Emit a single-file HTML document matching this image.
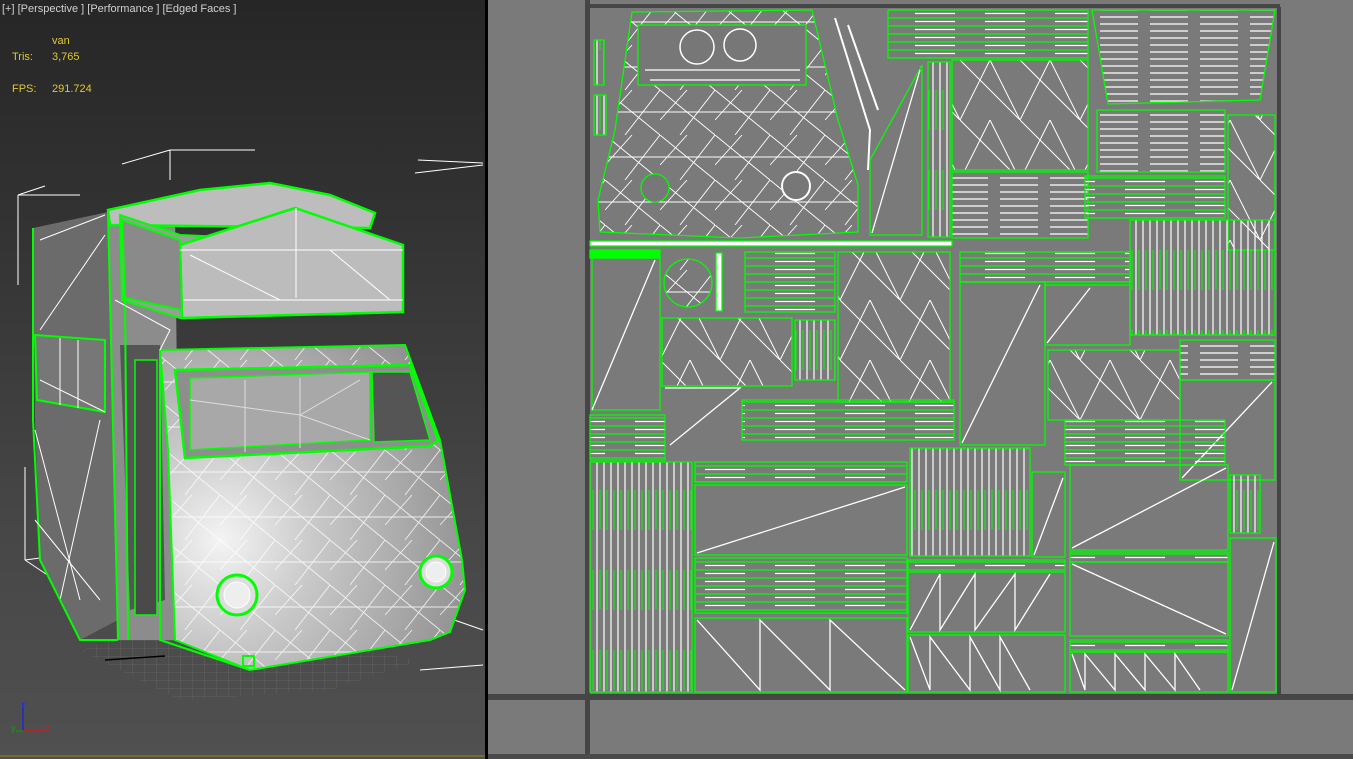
<!DOCTYPE html>
<html><head><meta charset="utf-8"><style>
html,body{margin:0;padding:0;width:1353px;height:759px;overflow:hidden;background:#7a7a7a}
#left{position:absolute;left:0;top:0;width:485px;height:759px;background:linear-gradient(#262626 0%,#333 30%,#474747 70%,#505050 100%)}
.t{position:absolute;font-family:"Liberation Sans",sans-serif;font-size:11px;white-space:pre}
svg{position:absolute;left:0;top:0}
</style></head><body>
<div id="left"></div>
<svg width="1353" height="759" viewBox="0 0 1353 759">
<defs>
<pattern id="hl" width="50" height="7" patternUnits="userSpaceOnUse"><line x1="0" y1="3" x2="38" y2="3" stroke="#fff" stroke-width="1.2"/></pattern>
<pattern id="hg" width="70" height="8" patternUnits="userSpaceOnUse"><line x1="0" y1="2" x2="70" y2="2" stroke="#0f0" stroke-width="1.3"/><line x1="5" y1="5.5" x2="45" y2="5.5" stroke="#fff" stroke-width="1.2"/></pattern>
<pattern id="vl" width="7" height="80" patternUnits="userSpaceOnUse"><line x1="2" y1="0" x2="2" y2="80" stroke="#fff" stroke-width="1.2"/><line x1="5" y1="10" x2="5" y2="50" stroke="#0f0" stroke-width="1"/></pattern>
<pattern id="tri" width="60" height="60" patternUnits="userSpaceOnUse"><path d="M0 60L30 0L60 60M0 0L60 60" stroke="#fff" stroke-width="1" fill="none"/></pattern>
<pattern id="mesh" width="55" height="45" patternUnits="userSpaceOnUse"><path d="M0 0L55 45M55 0L20 45M0 22H55M27 0L0 30" stroke="#fff" stroke-width="0.9" fill="none"/></pattern>
<pattern id="grid" width="12" height="8" patternUnits="userSpaceOnUse"><path d="M0 0H12M0 0V8" stroke="#666" stroke-width="1" fill="none"/></pattern>
<radialGradient id="body" cx="0.2" cy="0.6" r="0.9"><stop offset="0" stop-color="#f4f4f4"/><stop offset="0.35" stop-color="#c8c8c8"/><stop offset="1" stop-color="#8a8a8a"/></radialGradient>
<clipPath id="cab"><polygon points="160,350 405,345 440,440 462,560 465,590 450,632 430,640 250,670 175,640 168,450"/></clipPath>
</defs>

<polygon points="80,650 150,630 300,640 420,660 330,690 180,700" fill="url(#grid)" opacity="0.8"/>
<line x1="105" y1="660" x2="165" y2="656" stroke="#000" stroke-width="1.5"/>
<g stroke="#fff" stroke-width="1" fill="none">
<path d="M122 164L170 150M170 150V180M170 150H255"/><path d="M18 195L45 186M18 195V285M18 195H80"/>
<path d="M418 160L483 163M415 173L483 165"/><path d="M25 467V560M25 560L55 556M25 560L55 580"/>
<path d="M420 670L483 665M440 615L483 630"/>
</g>
<polygon points="33,228 108,212 118,620 80,640 40,560 35,420" fill="#6b6b6b"/>
<polygon points="108,212 175,212 180,640 118,640" fill="#8c8c8c"/>
<polygon points="120,345 160,345 165,600 130,610" fill="#555"/>
<polygon points="108,210 200,190 270,183 330,195 375,213 370,228 110,225" fill="#bdbdbd" stroke="#0f0" stroke-width="2.5"/>
<polygon points="120,215 180,235 403,245 403,312 180,318 122,300" fill="#9c9c9c" stroke="#0f0" stroke-width="2"/>
<polygon points="180,245 295,208 403,245 403,312 182,318" fill="#bcbcbc" stroke="#0f0" stroke-width="2.5"/>
<polygon points="122,220 180,240 182,310 125,298" fill="#8a8a8a" stroke="#0f0" stroke-width="2"/>
<path d="M180 250L403 250M296 208V298M183 300H403M190 255L280 300M330 250L390 300" stroke="#fff" stroke-width="1" fill="none"/>
<polygon points="160,350 405,345 440,440 462,560 465,590 450,632 430,640 250,670 175,640 168,450" fill="url(#body)"/>
<rect x="160" y="340" width="310" height="340" fill="url(#mesh)" opacity="0.8" clip-path="url(#cab)"/>
<polygon points="160,350 405,345 440,440 462,560 465,590 450,632 430,640 250,670 175,640 168,450" fill="none" stroke="#0f0" stroke-width="2"/>
<polygon points="175,370 410,365 438,440 430,446 185,458" fill="#8e8e8e" stroke="#0f0" stroke-width="2.5"/>
<polygon points="190,378 370,372 370,440 190,450" fill="#a8a8a8" stroke="#0f0" stroke-width="1.5"/>
<polygon points="372,372 410,372 430,440 374,442" fill="#555" stroke="#0f0" stroke-width="1.5"/>
<path d="M300 378V448M245 380V452M190 400L300 415L360 380M300 415L370 440" stroke="#ddd" stroke-width="1" fill="none"/>
<polygon points="35,335 105,340 105,412 37,400" fill="#777" stroke="#0f0" stroke-width="2"/>
<path d="M60 338V405M78 340V408M40 380L105 412M35 430L80 600M100 420L60 600" stroke="#fff" stroke-width="1" fill="none"/>
<path d="M33 228V420L40 560L80 640L118 640M108 212L118 640M125 300L128 640M160 350V640L250 670" stroke="#0f0" stroke-width="2" fill="none"/>
<path d="M40 240L105 215M40 330L105 235M115 300L170 330L160 350M35 520L100 600" stroke="#fff" stroke-width="1" fill="none"/>
<rect x="135" y="360" width="22" height="255" fill="#4a4a4a" stroke="#0f0" stroke-width="1.5"/>
<circle cx="237" cy="595" r="20" fill="#ddd" stroke="#0f0" stroke-width="3"/>
<circle cx="237" cy="595" r="13" fill="#eee" stroke="#fff"/>
<circle cx="436" cy="572" r="16" fill="#ddd" stroke="#0f0" stroke-width="3"/>
<circle cx="436" cy="572" r="10" fill="#eee" stroke="#fff"/>
<rect x="243" y="656" width="11" height="10" fill="none" stroke="#0f0" stroke-width="2"/>
<line x1="23" y1="731" x2="23" y2="703" stroke="#1a2ad0" stroke-width="1.5"/>
<line x1="23" y1="731" x2="45" y2="731" stroke="#d01a1a" stroke-width="1.5"/>
<line x1="16" y1="731" x2="23" y2="731" stroke="#1a8a1a" stroke-width="1.5"/>
<text x="22" y="707" fill="#2a3ae0" font-family="Liberation Sans" font-size="9">z</text>
<text x="45" y="731" fill="#d02020" font-family="Liberation Sans" font-size="9">x</text>
<text x="11" y="731" fill="#1a9a1a" font-family="Liberation Sans" font-size="9">y</text>
<rect x="0" y="755" width="485" height="2" fill="#7a6a30"/>

<rect x="485" y="0" width="3" height="759" fill="#000"/>
<rect x="585" y="0" width="5" height="759" fill="#454545"/>
<rect x="488" y="694" width="865" height="6" fill="#454545"/>
<rect x="1277" y="7" width="4" height="690" fill="#454545"/>
<rect x="590" y="4" width="690" height="4" fill="#454545"/>
<rect x="488" y="754" width="865" height="5" fill="#4a4a4a"/>

<g fill="none" stroke="#0f0" stroke-width="1.3">
<path d="M632 12L812 10L838 120L858 185L858 232L740 238L600 232L598 200L615 130Z" fill="url(#mesh)"/>
<rect x="638" y="25" width="168" height="60" fill="#777"/>
<circle cx="697" cy="47" r="17" stroke="#fff" stroke-width="1.5"/><circle cx="740" cy="45" r="16" stroke="#fff" stroke-width="1.5"/>
<path d="M645 70H800M650 80H800" stroke="#fff"/>
<circle cx="655" cy="188" r="14" fill="#777"/><circle cx="796" cy="186" r="14" fill="#777" stroke="#fff" stroke-width="2"/>
<rect x="594" y="40" width="10" height="45" fill="url(#vl)"/><rect x="594" y="95" width="12" height="40" fill="url(#vl)"/>
<path d="M835 18L870 130L868 170M848 25L878 110" stroke="#fff" stroke-width="2"/>
<polygon points="870,160 922,65 922,235 870,235"/><path d="M872 233L920 70" stroke="#fff"/>
<rect x="928" y="62" width="22" height="175" fill="url(#vl)"/>
<rect x="888" y="10" width="200" height="48" fill="url(#hg)"/>
<rect x="952" y="60" width="136" height="110" fill="url(#tri)"/>
<rect x="952" y="172" width="136" height="66" fill="url(#hl)"/>
<polygon points="1092,10 1275,10 1260,100 1108,104" fill="url(#hl)"/>
<rect x="1097" y="110" width="128" height="62" fill="url(#hl)"/>
<rect x="1085" y="176" width="140" height="42" fill="url(#hg)"/>
<rect x="1228" y="115" width="47" height="135" fill="url(#tri)"/>
<rect x="590" y="241" width="362" height="5" fill="#fff"/>
<rect x="590" y="250" width="70" height="8" fill="#0f0"/>
<polygon points="592,258 660,258 660,410 592,410"/><path d="M592 410L655 260" stroke="#fff"/>
<circle cx="688" cy="283" r="24" fill="url(#mesh)"/>
<rect x="716" y="253" width="6" height="58" fill="#fff"/>
<rect x="745" y="252" width="90" height="60" fill="url(#hg)"/>
<rect x="662" y="318" width="130" height="68" fill="url(#tri)"/>
<rect x="795" y="320" width="40" height="60" fill="url(#vl)"/>
<rect x="838" y="252" width="112" height="150" fill="url(#tri)"/>
<path d="M665 388L740 388L670 445" stroke="#fff"/>
<rect x="590" y="415" width="75" height="45" fill="url(#hg)"/>
<rect x="742" y="400" width="212" height="40" fill="url(#hg)"/>
<rect x="960" y="282" width="85" height="163"/><path d="M962 443L1040 285" stroke="#fff"/>
<rect x="960" y="252" width="170" height="30" fill="url(#hg)"/>
<rect x="1045" y="285" width="85" height="60"/><path d="M1047 343L1090 288" stroke="#fff"/>
<rect x="1130" y="220" width="145" height="115" fill="url(#vl)"/>
<rect x="1048" y="350" width="132" height="70" fill="url(#tri)"/>
<rect x="1180" y="340" width="95" height="40" fill="url(#hl)"/>
<rect x="1180" y="380" width="95" height="100"/><path d="M1182 478L1272 382" stroke="#fff"/>
<rect x="1065" y="420" width="160" height="45" fill="url(#hg)"/>
<rect x="590" y="462" width="102" height="230" fill="url(#vl)"/>
<rect x="695" y="462" width="212" height="20" fill="url(#hg)"/>
<rect x="695" y="485" width="212" height="70"/><path d="M697 553L905 487" stroke="#fff"/>
<rect x="695" y="558" width="212" height="55" fill="url(#hg)"/>
<rect x="695" y="618" width="212" height="74"/><path d="M697 620L760 690L760 620L830 690L830 620L905 690" stroke="#fff"/>
<rect x="910" y="448" width="120" height="108" fill="url(#vl)"/>
<rect x="1032" y="472" width="33" height="85"/><path d="M1034 555L1063 478" stroke="#fff"/>
<rect x="908" y="560" width="157" height="10" fill="url(#hg)"/>
<rect x="908" y="572" width="157" height="60"/><path d="M910 630L940 574V630L975 574V630L1015 574V630L1050 574" stroke="#fff"/>
<rect x="908" y="635" width="157" height="57"/><path d="M910 637L930 690V637L970 690V637L1000 690V637L1030 690" stroke="#fff"/>
<rect x="1070" y="465" width="158" height="85"/><path d="M1072 548L1226 468" stroke="#fff"/>
<rect x="1070" y="552" width="158" height="10" fill="url(#hg)"/>
<rect x="1070" y="562" width="158" height="74"/><path d="M1072 564L1226 634" stroke="#fff"/>
<rect x="1070" y="640" width="158" height="12" fill="url(#hg)"/>
<rect x="1070" y="652" width="158" height="40"/><path d="M1072 654L1085 690V654L1115 690V654L1145 690V654L1175 690V654L1200 690" stroke="#fff"/>
<rect x="1230" y="538" width="46" height="154"/><path d="M1232 690L1274 542" stroke="#fff"/>
<rect x="1230" y="475" width="30" height="58" fill="url(#vl)"/>
</g>
</svg>
<div class="t" style="left:2px;top:3px;color:#d0d0d0">[+] [Perspective ] [Performance ] [Edged Faces ]</div>
<div class="t" style="left:52px;top:35px;color:#e0c830">van</div>
<div class="t" style="left:12px;top:51px;color:#e0c830">Tris:</div>
<div class="t" style="left:52px;top:51px;color:#e0c830">3,765</div>
<div class="t" style="left:12px;top:83px;color:#e0c830">FPS:</div>
<div class="t" style="left:52px;top:83px;color:#e0c830">291.724</div>
</body></html>
